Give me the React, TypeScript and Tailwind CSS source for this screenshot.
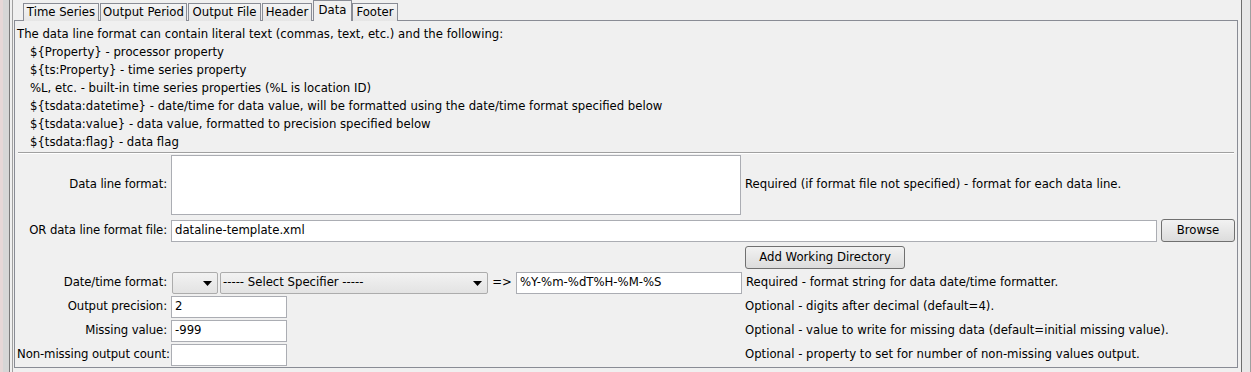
import React from "react";

const font = { fontFamily: '"DejaVu Sans", Verdana, sans-serif' };

const tabs = [
  { t: "Time Series", w: "w-[76px]" },
  { t: "Output Period", w: "w-[87px]" },
  { t: "Output File", w: "w-[73px]" },
  { t: "Header", w: "w-[50px]" },
  { t: "Data", w: "w-[39px]" },
  { t: "Footer", w: "w-[46px]" },
];

const helpLines = [
  "${Property} - processor property",
  "${ts:Property} - time series property",
  "%L, etc. - built-in time series properties (%L is location ID)",
  "${tsdata:datetime} - date/time for data value, will be formatted using the date/time format specified below",
  "${tsdata:value} - data value, formatted to precision specified below",
  "${tsdata:flag} - data flag",
];

const Arrow = () => (
  <svg width="9" height="5" viewBox="0 0 9 5" className="shrink-0">
    <path d="M0 0 H9 L4.5 5 Z" fill="#000" />
  </svg>
);

const TextBox = ({ value = "", className = "" }: { value?: string; className?: string }) => (
  <div
    className={`h-[22px] bg-white border border-[#abadb3] flex items-center px-[3px] text-black whitespace-nowrap ${className}`}
  >
    {value}
  </div>
);

const Button = ({ label, className = "" }: { label: string; className?: string }) => (
  <div
    className={`h-[23px] flex items-center justify-center rounded-[3px] border border-[#707070] bg-gradient-to-b from-[#f2f2f2] to-[#dcdcdc] text-black whitespace-nowrap ${className}`}
  >
    {label}
  </div>
);

const Label = ({ text }: { text: string }) => (
  <div className="w-[151px] shrink-0 text-right pr-[1px] text-black whitespace-nowrap tracking-[-0.1px]">{text}</div>
);

export default function App() {
  return (
    <div className="w-[1251px] h-[372px] bg-[#f0f0f0] text-[11.7px] text-black overflow-hidden flex" style={font}>
      {/* left window edge */}
      <div className="w-[14px] shrink-0 flex h-full">
        <div className="w-[3px] bg-[#e6d7d7]" />
        <div className="w-[7px] bg-[#d6d6d6] border-r border-[#7a7a7a]" />
        <div className="w-[3px] bg-[#f0f0f0] border-r border-[#a0a0a0]" />
      </div>

      {/* tabbed pane */}
      <div className="w-[1224px] shrink-0 flex flex-col h-[368px]">
        <div className="flex items-end h-[21px] pl-[9px] relative z-10">
          {tabs.map(({ t, w }) => {
            const sel = t === "Data";
            return sel ? (
              <div
                key={t}
                className={`${w} h-[21px] border border-b-0 border-[#898c95] bg-[#f0f0f0] flex justify-center items-start pt-[1px]`}
              >
                {t}
              </div>
            ) : (
              <div
                key={t}
                className={`${w} h-[18px] mr-[1px] border border-b-0 border-[#898c95] bg-gradient-to-b from-[#f4f4f4] to-[#e6e6e6] flex justify-center items-center whitespace-nowrap`}
              >
                {t}
              </div>
            );
          })}
        </div>
        <div className="flex-1 -mt-[1px] border border-[#898c95] flex flex-col px-[2px] pt-[4px]">
          <div className="leading-[18px] whitespace-nowrap">
            <div>The data line format can contain literal text (commas, text, etc.) and the following:</div>
            {helpLines.map((l) => (
              <div key={l} className="pl-[13px]">
                {l}
              </div>
            ))}
          </div>
          <div className="mt-[1px] mx-[1px] border-t border-[#a0a0a0] border-b-white border-b h-[2px]" />

          <div className="flex flex-col pt-[1px] whitespace-nowrap">
            <div className="flex items-center h-[60px]">
              <Label text="Data line format:" />
              <div className="ml-[3px] w-[570px] h-[60px] bg-white border border-[#abadb3]" />
              <div className="ml-[4px]">Required (if format file not specified) - format for each data line.</div>
            </div>

            <div className="flex items-center mt-[4px]">
              <Label text="OR data line format file:" />
              <TextBox value="dataline-template.xml" className="ml-[3px] w-[986px]" />
              <Button label="Browse" className="ml-[4px] w-[74px]" />
            </div>

            <div className="flex items-center mt-[4px]">
              <div className="w-[728px] shrink-0" />
              <Button label="Add Working Directory" className="w-[160px]" />
            </div>

            <div className="flex items-center mt-[3px] h-[22px]">
              <Label text="Date/time format:" />
              <div className="ml-[4px] w-[46px] h-[22px] rounded-[2px] border border-[#acacac] bg-gradient-to-b from-[#f2f2f2] to-[#e3e3e3] flex items-center justify-end pr-[5px]">
                <Arrow />
              </div>
              <div className="ml-[2px] w-[268px] h-[22px] rounded-[2px] border border-[#acacac] bg-gradient-to-b from-[#f2f2f2] to-[#e3e3e3] flex items-center justify-between pl-[2px] pr-[5px]">
                <span>----- Select Specifier -----</span>
                <Arrow />
              </div>
              <div className="w-[28px] text-center">=&gt;</div>
              <TextBox value="%Y-%m-%dT%H-%M-%S" className="w-[226px]" />
              <div className="ml-[4px]">Required - format string for data date/time formatter.</div>
            </div>

            {[
              ["Output precision:", "2", "Optional - digits after decimal (default=4)."],
              ["Missing value:", "-999", "Optional - value to write for missing data (default=initial missing value)."],
              ["Non-missing output count:", "", "Optional - property to set for number of non-missing values output."],
            ].map(([label, value, desc]) => (
              <div key={label} className="flex items-center mt-[2px] h-[22px]">
                <Label text={label} />
                <TextBox value={value} className="ml-[3px] w-[116px]" />
                <div className="ml-[458px]">{desc}</div>
              </div>
            ))}
          </div>
        </div>
      </div>

      {/* right window edge */}
      <div className="flex-1 flex h-full">
        <div className="w-[3px]" />
        <div className="w-[1px] bg-[#6e6e6e]" />
        <div className="flex-1 bg-[#e8e8e8] border-r border-[#a0a0a0]" />
      </div>
    </div>
  );
}
